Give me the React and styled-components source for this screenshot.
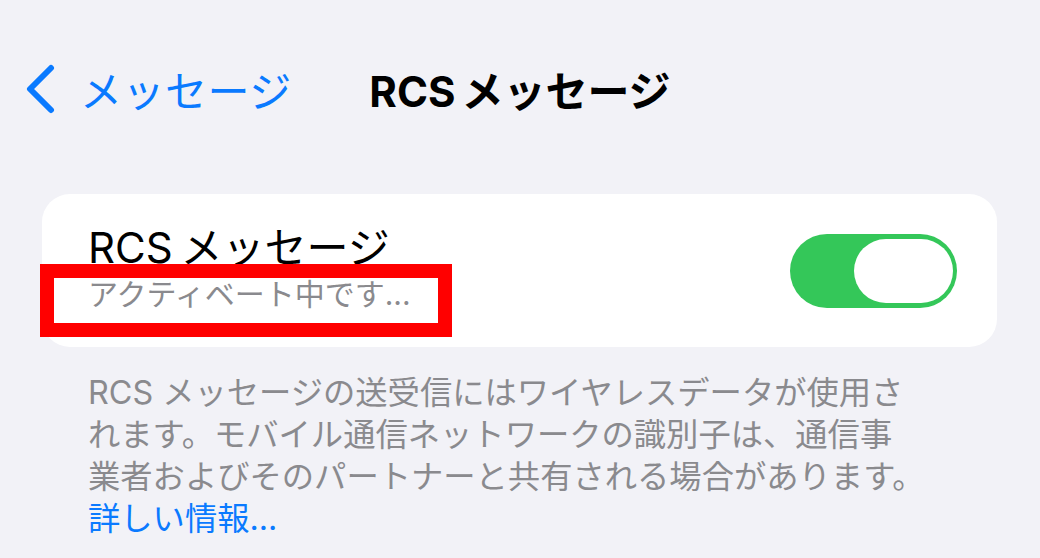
import React from "react";
import styled, { createGlobalStyle } from "styled-components";

const GlobalStyle = createGlobalStyle`
  html, body {
    margin: 0;
    padding: 0;
    background: #f2f2f7;
  }
  body {
    font-family: "Inter", "Noto Sans CJK JP", sans-serif;
    -webkit-font-smoothing: antialiased;
  }
`;

const Page = styled.div`
  width: 1040px;
  height: 558px;
  background: #f2f2f7;
  overflow: hidden;
  display: flex;
  flex-direction: column;
`;

const NavBar = styled.header`
  display: grid;
  grid-template-columns: 1fr auto 1fr;
  align-items: center;
  height: 60px;
  margin-top: 58px;
  padding: 0 25px;
`;

const BackButton = styled.button`
  justify-self: start;
  display: flex;
  align-items: center;
  gap: 25px;
  border: none;
  background: none;
  padding: 0;
  color: #0a7aff;
  font-family: "Inter", "Noto Sans CJK JP", sans-serif;
  font-size: 42px;
  letter-spacing: 0.5px;
  font-weight: 400;
  cursor: pointer;
`;

const Title = styled.h1`
  margin: 0;
  font-size: 42px;
  font-weight: 700;
  color: #000;
  word-spacing: -4px;
  white-space: nowrap;
`;

const Card = styled.section`
  position: relative;
  margin: 76px 43px 0 42px;
  height: 153px;
  box-sizing: border-box;
  background: #fff;
  border-radius: 28px;
  display: flex;
  align-items: center;
  justify-content: space-between;
  padding: 0 40px 0 46px;
`;

const Labels = styled.div`
  display: flex;
  flex-direction: column;
  gap: 2px;
  margin-top: -4px;
`;

const RowTitle = styled.div`
  font-size: 42px;
  line-height: 48px;
  color: #000;
  word-spacing: -4px;
  white-space: nowrap;
`;

const RowSubtitle = styled.div`
  font-size: 30px;
  line-height: 40px;
  color: #8a8a8e;
  white-space: nowrap;
`;

const Switch = styled.div`
  width: 167px;
  height: 74px;
  box-sizing: border-box;
  border-radius: 37px;
  background: #34c759;
  padding: 5px 4px 5px 0;
  display: flex;
  justify-content: ${(p) => (p.$on ? "flex-end" : "flex-start")};
  align-items: center;
`;

const Knob = styled.div`
  width: 99px;
  height: 64px;
  border-radius: 32px;
  background: #fff;
`;

const Highlight = styled.div`
  position: absolute;
  left: -2px;
  top: 70px;
  width: 412px;
  height: 73px;
  box-sizing: border-box;
  border: 14px solid #ff0000;
  pointer-events: none;
`;

const Footer = styled.div`
  margin: 25px 0 0 88px;
  font-size: 32.3px;
  line-height: 42px;
  color: #8a8a8e;
`;

const FooterLine = styled.span`
  display: block;
  white-space: nowrap;
`;

const Link = styled.a`
  display: block;
  color: #0a7aff;
  text-decoration: none;
`;

const Chevron = () => (
  <svg width="30" height="50" viewBox="0 0 30 50" aria-hidden="true">
    <path
      d="M26 4 L5 25 L26 46"
      fill="none"
      stroke="#0a7aff"
      strokeWidth="6"
      strokeLinecap="round"
      strokeLinejoin="round"
    />
  </svg>
);

export default function App() {
  return (
    <Page>
      <GlobalStyle />
      <NavBar>
        <BackButton>
          <Chevron />
          <span>メッセージ</span>
        </BackButton>
        <Title>RCS メッセージ</Title>
        <span />
      </NavBar>
      <Card>
        <Labels>
          <RowTitle>RCS メッセージ</RowTitle>
          <RowSubtitle>アクティベート中です...</RowSubtitle>
        </Labels>
        <Switch $on>
          <Knob />
        </Switch>
        <Highlight />
      </Card>
      <Footer>
        <FooterLine>RCS メッセージの送受信にはワイヤレスデータが使用さ</FooterLine>
        <FooterLine>れます。モバイル通信ネットワークの識別子は、通信事</FooterLine>
        <FooterLine>業者およびそのパートナーと共有される場合があります。</FooterLine>
        <Link href="#">詳しい情報...</Link>
      </Footer>
    </Page>
  );
}
